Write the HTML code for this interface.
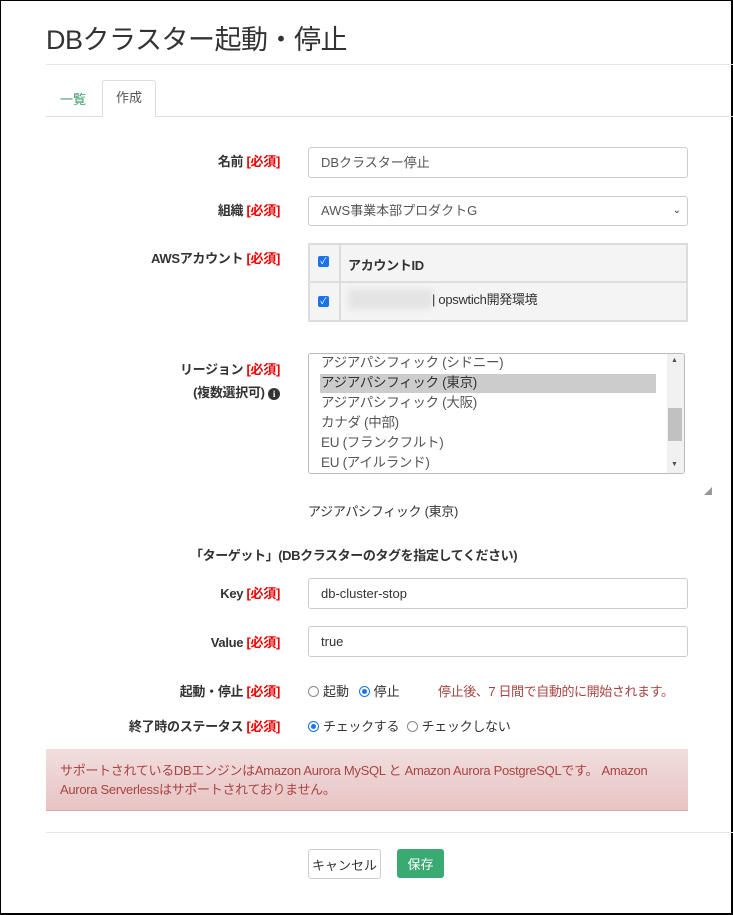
<!DOCTYPE html>
<html><head><meta charset="utf-8"><style>
*{box-sizing:border-box;margin:0;padding:0}
body{width:733px;height:915px;background:#fff;font-family:"Liberation Sans","Noto Sans CJK JP",sans-serif;font-size:13px;color:#333;position:relative;overflow:hidden}
.frame{position:absolute;left:0;top:0;width:733px;height:915px;border:1px solid #000;border-right-width:2px;border-bottom-width:2px}
.a{position:absolute}
.lbl{position:absolute;right:453px;font-weight:bold;white-space:nowrap;letter-spacing:-0.3px}
.req{color:#e00}
.inp{position:absolute;left:308px;width:380px;border:1px solid #ccc;border-radius:3px;padding-left:12px;line-height:29px;height:31px;color:#555}
.radio{display:inline-block;width:11px;height:11px;border:1px solid #888;border-radius:50%;vertical-align:-1px;margin-right:4px;position:relative}
.radio.on{border-color:#1a73e8}
.radio.on:after{content:"";position:absolute;left:2px;top:2px;width:5px;height:5px;border-radius:50%;background:#1a73e8}
.cb{position:absolute;width:11px;height:11px;background:#1a73e8;border-radius:2px;color:#fff;font-size:9px;line-height:11px;text-align:center}
</style></head><body>
<div class="frame"></div>
<div class="a" style="left:46px;top:18px;font-size:27px;letter-spacing:-0.5px;color:#333;">DBクラスター起動・停止</div>
<div class="a" style="left:46px;top:64px;width:687px;border-top:1px solid #e5e5e5"></div>
<div class="a" style="left:46px;top:116px;width:687px;border-top:1px solid #ddd"></div>
<div class="a" style="left:60px;top:89px;color:#3a9a6a">一覧</div>
<div class="a" style="left:102px;top:80px;width:54px;height:37px;border:1px solid #ddd;border-bottom:none;background:#fff;border-radius:3px 3px 0 0;text-align:center;line-height:33px;color:#555">作成</div>

<div class="lbl" style="top:151px">名前 <span class="req">[必須]</span></div>
<div class="inp" style="top:147px">DBクラスター停止</div>
<div class="lbl" style="top:200px">組織 <span class="req">[必須]</span></div>
<div class="inp" style="top:196px;height:30px;line-height:28px">AWS事業本部プロダクトG<span style="position:absolute;right:6px;top:0;color:#333;font-size:10px">&#8964;</span></div>
<div class="lbl" style="top:248px">AWSアカウント <span class="req">[必須]</span></div>
<div class="a" style="left:308px;top:243px;width:380px;height:79px;border:2px solid #ddd;background:#f4f4f4">
 <div class="a" style="left:0;top:36px;width:376px;border-top:2px solid #ddd"></div>
 <div class="a" style="left:29px;top:0;height:75px;border-left:2px solid #ddd"></div>
 <div class="cb" style="left:8px;top:11px">✓</div>
 <div class="cb" style="left:8px;top:51px">✓</div>
 <div class="a" style="left:38px;top:10px;font-weight:bold;color:#333;letter-spacing:-0.3px">アカウントID</div>
 <div class="a" style="left:38px;top:44px;width:84px;height:20px;background:#e4e4e4;filter:blur(3px)"></div>
 <div class="a" style="left:122px;top:44px;color:#333;letter-spacing:-0.3px">| opswtich開発環境</div>
</div>

<div class="lbl" style="top:359px">リージョン <span class="req">[必須]</span></div>
<div class="lbl" style="top:382px">(複数選択可) <span style="display:inline-block;width:12px;height:12px;border-radius:50%;background:#333;color:#fff;font-size:9px;line-height:12px;text-align:center;font-family:'Liberation Serif'">i</span></div>
<div class="a" style="left:308px;top:353px;width:377px;height:121px;border:1px solid #bbb;border-radius:3px;overflow:hidden;color:#555;font-size:13.5px;letter-spacing:-0.3px">
 <div class="a" style="left:11px;top:20px;width:336px;height:19px;background:#ccc"></div>
 <div class="a" style="left:12px;top:-1px;line-height:20px">アジアパシフィック (シドニー)<br><span style="color:#333">アジアパシフィック (東京)</span><br>アジアパシフィック (大阪)<br>カナダ (中部)<br>EU (フランクフルト)<br>EU (アイルランド)</div>
 <div class="a" style="left:358px;top:0;width:17px;height:119px;background:#f1f1f1"></div>
 <div class="a" style="left:359px;top:54px;width:14px;height:33px;background:#c1c1c1"></div>
 <div class="a" style="left:362px;top:3px;font-size:7px;color:#505050">▲</div>
 <div class="a" style="left:362px;top:107px;font-size:7px;color:#505050">▼</div>
</div>
<div class="a" style="left:704px;top:486px;font-size:8px;color:#999">◢</div>
<div class="a" style="left:308px;top:501px;color:#333;letter-spacing:-0.3px">アジアパシフィック (東京)</div>

<div class="a" style="left:190px;top:545px;font-weight:bold;letter-spacing:-0.4px">「ターゲット」(DBクラスターのタグを指定してください)</div>
<div class="lbl" style="top:583px">Key <span class="req">[必須]</span></div>
<div class="inp" style="top:578px;color:#333">db-cluster-stop</div>
<div class="lbl" style="top:632px">Value <span class="req">[必須]</span></div>
<div class="inp" style="top:626px;color:#333">true</div>
<div class="lbl" style="top:681px">起動・停止 <span class="req">[必須]</span></div>
<div class="a" style="left:308px;top:681px"><span class="radio"></span>起動 <span class="radio on" style="margin-left:6px"></span>停止</div>
<div class="a" style="left:438px;top:681px;color:#a94442;letter-spacing:-0.4px">停止後、7 日間で自動的に開始されます。</div>
<div class="lbl" style="top:716px">終了時のステータス <span class="req">[必須]</span></div>
<div class="a" style="left:308px;top:716px;letter-spacing:-0.3px"><span class="radio on"></span>チェックする <span class="radio" style="margin-left:4px"></span>チェックしない</div>

<div class="a" style="left:46px;top:749px;width:642px;height:62px;background:linear-gradient(#f2dede,#e7c3c3);border-bottom:1px solid #dca7a7;color:#a94442;padding:12px 14px;line-height:19px;letter-spacing:-0.3px">サポートされているDBエンジンはAmazon Aurora MySQL と Amazon Aurora PostgreSQLです。 Amazon Aurora Serverlessはサポートされておりません。</div>
<div class="a" style="left:46px;top:832px;width:687px;border-top:1px solid #e5e5e5"></div>
<div class="a" style="left:308px;top:849px;width:73px;height:30px;border:1px solid #ccc;border-radius:3px;display:flex;align-items:center;justify-content:center;color:#333">キャンセル</div>
<div class="a" style="left:397px;top:849px;width:47px;height:29px;background:#3aaa72;border-radius:3px;display:flex;align-items:center;justify-content:center;color:#fff">保存</div>
</body></html>
